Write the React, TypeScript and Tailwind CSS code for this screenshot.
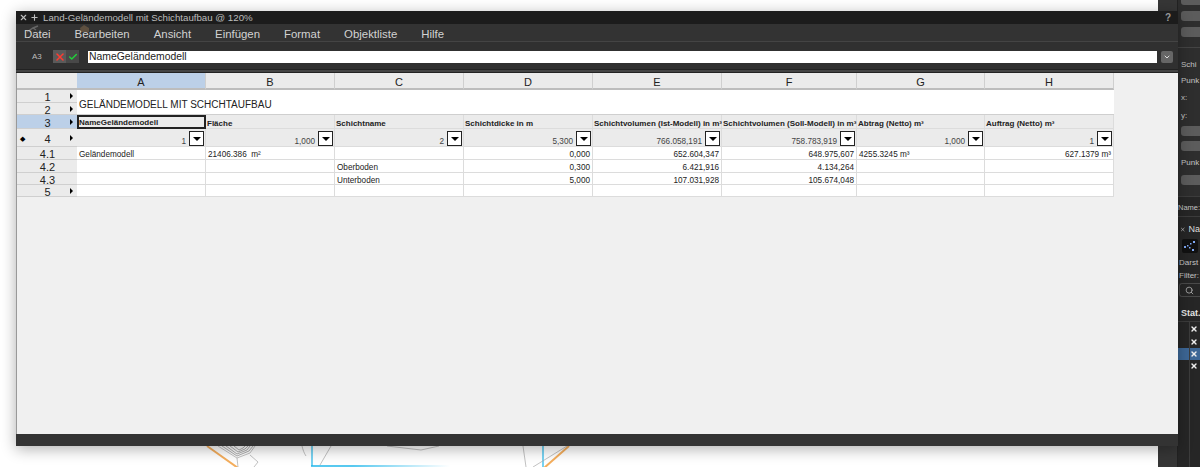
import React from 'react';
import { X, Plus, Check, Search, ChevronDown } from 'lucide-react';

const menuItems = ['Datei', 'Bearbeiten', 'Ansicht', 'Einfügen', 'Format', 'Objektliste', 'Hilfe'];
const columns = ['A', 'B', 'C', 'D', 'E', 'F', 'G', 'H'];

const headerRow = [
  'NameGeländemodell',
  'Fläche',
  'Schichtname',
  'Schichtdicke in m',
  'Schichtvolumen (Ist-Modell) in m³',
  'Schichtvolumen (Soll-Modell) in m³',
  'Abtrag (Netto) m³',
  'Auftrag (Netto) m³',
];
const summaryRow = ['1', '1,000', '2', '5,300', '766.058,191', '758.783,919', '1,000', '1'];

const dataRows = [
  { label: '4.1', cells: ['Geländemodell', '21406.386  m²', '', '0,000', '652.604,347', '648.975,607', '4255.3245 m³', '627.1379 m³'] },
  { label: '4.2', cells: ['', '', 'Oberboden', '0,300', '6.421,916', '4.134,264', '', ''] },
  { label: '4.3', cells: ['', '', 'Unterboden', '5,000', '107.031,928', '105.674,048', '', ''] },
  { label: '5', cells: ['', '', '', '', '', '', '', ''], arrow: true },
];

// columns that hold right aligned values in the data rows
const rightAligned = [false, false, false, true, true, true, false, true];

const Arrow = () => (
  <span className="absolute right-[4px] top-1/2 -translate-y-1/2 border-y-[3px] border-l-[3px] border-y-transparent border-l-black" />
);

const RowHead = ({ label, arrow, active, diamond }: { label: string; arrow?: boolean; active?: boolean; diamond?: boolean }) => (
  <div className={`relative flex items-center justify-center pt-[3px] text-[11px] leading-none text-[#222] border-b border-[#cfcfcf] ${active ? 'bg-[#bcd0e8]' : 'bg-[#ebebeb]'}`}>
    {diamond && <span className="absolute left-[3px] top-1/2 -translate-y-1/2 text-[7px] text-black">◆</span>}
    <span className="pl-[1px]">{label}</span>
    {arrow && <Arrow />}
  </div>
);

const Dropdown = () => (
  <span className="ml-[3px] flex h-[15px] w-[15px] shrink-0 items-center justify-center border border-[#222] bg-white">
    <span className="border-x-[4px] border-t-[4px] border-x-transparent border-t-black" />
  </span>
);

const SideButton = ({ className }: { className: string }) => (
  <div className={`h-[10px] rounded-l-[3px] bg-[#5c5c5c] ml-[3px] ${className}`} />
);

const SideLabel = ({ children, className }: { children: React.ReactNode; className: string }) => (
  <div className={`whitespace-nowrap text-[8px] leading-[10px] text-[#c4c4c4] ${className}`}>{children}</div>
);

const SidePanel = () => (
  <div className="flex h-full w-[42px] overflow-hidden font-['Liberation_Sans',sans-serif]">
    <div className="w-[20px] border-r border-[#222] bg-[#363636]" />
    <div className="relative w-[22px] bg-[#262626]">
      <div className="flex h-[197px] flex-col border-b border-[#3c3c3c] bg-[#2e2e2e]">
        <SideButton className="mt-[-5px]" />
        <SideButton className="mt-[6px]" />
        <SideButton className="mt-[6px]" />
        <div className="mt-[10px] border-t border-[#444]" />
        <SideLabel className="mt-[12px] ml-[3px]">Schi</SideLabel>
        <SideLabel className="mt-[6px] ml-[3px]">Punk</SideLabel>
        <SideLabel className="mt-[7px] ml-[3px]">x:</SideLabel>
        <SideLabel className="mt-[8px] ml-[3px]">y:</SideLabel>
        <SideButton className="mt-[5px]" />
        <SideButton className="mt-[5px]" />
        <SideLabel className="mt-[7px] ml-[3px]">Punk</SideLabel>
        <SideButton className="mt-[7px]" />
      </div>
      <div className="mt-[6px] whitespace-nowrap text-[7.5px] leading-[10px] text-[#c4c4c4]">Name:</div>
      <div className="mt-[3px] border-t border-[#3c3c3c]" />
      <div className="mt-[7px] flex items-center gap-[3px] pl-[2px] text-[9px] leading-[10px] text-[#ddd]">
        <X size={9} strokeWidth={3} className="text-[#ccc]" />
        <span>Na</span>
      </div>
      <div className="mt-[5px] ml-[4px] flex h-[14px] w-[16px] items-center justify-center rounded-[2px] bg-[#111]">
        <svg width="12" height="10" viewBox="0 0 12 10" fill="#7fa8f5">
          <rect x="0" y="5" width="2" height="2" />
          <rect x="3" y="4" width="1.5" height="1.5" />
          <rect x="6" y="2" width="1.5" height="1.5" />
          <rect x="9" y="0" width="2" height="2" />
          <rect x="5" y="6" width="1.5" height="1.5" />
          <rect x="8" y="8" width="2" height="2" />
        </svg>
      </div>
      <SideLabel className="mt-[5px] ml-[1px]">Darst</SideLabel>
      <SideLabel className="mt-[3px] ml-[1px]">Filter:</SideLabel>
      <div className="mt-[2px] ml-[1px] flex h-[14px] items-center rounded-l-[3px] border border-r-0 border-[#4a4a4a] pl-[5px]">
        <Search size={9} className="text-[#bbb]" />
      </div>
      <div className="mt-[11px] border-b border-[#3c3c3c] pb-[3px] pl-[3px] text-[9px] font-bold leading-[10px] text-[#e4e4e4]">Stat.</div>
      <div className="relative flex flex-col pt-[1px]">
        <div className="absolute left-[11px] top-0 h-[200px] border-l border-[#3c3c3c]" />
        {[false, false, true, false].map((selected, i) => (
          <div key={i} className={`flex h-[12.4px] items-center pl-[12px] ${selected ? 'bg-[#3d6796]' : ''}`}>
            <X size={8} strokeWidth={4} className="text-[#eee]" />
          </div>
        ))}
      </div>
    </div>
  </div>
);

const Backdrop = () => (
  <svg className="absolute left-0 top-0" width="1200" height="467" viewBox="0 0 1200 467" fill="none">
    <defs>
      <linearGradient id="fade" x1="312" y1="0" x2="450" y2="0" gradientUnits="userSpaceOnUse">
        <stop offset="0.3" stopColor="#1fb6ea" />
        <stop offset="1" stopColor="#1fb6ea" stopOpacity="0" />
      </linearGradient>
    </defs>
    <path d="M207 446L238 468" stroke="#f5ae5c" strokeWidth="2" />
    <path d="M569 446L544 468" stroke="#f5ae5c" strokeWidth="2" />
    <path d="M312 440V466" stroke="#1fb6ea" strokeWidth="1.2" />
    <path d="M543 440V468" stroke="#1fb6ea" strokeWidth="1.2" />
    <path d="M311 466H450" stroke="url(#fade)" strokeWidth="1.4" />
    <g stroke="#a8a8a8" strokeWidth="0.7">
      <path d="M331 446L320 465" />
      <path d="M302 446C303 450 304 453 306 456" />
      <path d="M387 446L421 450L439 446" />
      <path d="M523 446L526 467" />
      <path d="M567 446L533 467" />
      <path d="M218 446L237 458L250 453L255 446" />
      <path d="M237 458L238 467M250 455L258 462L254 467" />
    </g>
    <g stroke="#8c8c8c" strokeWidth="0.7">
      <path d="M222 446L237 456L249 451L253 446" />
      <path d="M226 446L237 454L247 450L250 446" />
      <path d="M230 446L238 452L245 449L248 446" />
      <path d="M234 446L239 450L243 448L245 446" />
    </g>
  </svg>
);

const SheetTable = () => (
  <div className="grid w-fit grid-cols-[60px_129px_129px_129px_129px_129px_135px_128px_129px] grid-rows-[17px_13px_12px_14px_18px_13px_13px_12px_12px] text-[8.2px] leading-none text-[#222]">
    {/* column header */}
    <div className="border-b-2 border-[#bdbdbd] bg-[#ebebeb]" />
    {columns.map((c, i) => (
      <div
        key={c}
        className={`flex items-center justify-center border-r border-b-2 border-r-[#cfcfcf] border-b-[#bdbdbd] pt-[3px] text-[11px] ${i === 0 ? 'bg-[#bcd0e8]' : 'bg-[#ebebeb]'}`}
      >
        {c}
      </div>
    ))}

    {/* rows 1-2, merged title */}
    <RowHead label="1" arrow />
    <div className="col-span-8 row-span-2 flex items-center border-b border-[#cfcfcf] bg-white pl-[2px] pt-[6px] text-[10px] text-[#222]">
      GELÄNDEMODELL MIT SCHCHTAUFBAU
    </div>
    <RowHead label="2" arrow />

    {/* row 3 */}
    <RowHead label="3" arrow active />
    {headerRow.map((text, i) => (
      <div
        key={text}
        className={`flex items-center overflow-visible whitespace-nowrap bg-[#ebebeb] text-[8px] font-bold ${i === 0 ? 'border-2 border-[#222] pt-[1px]' : 'border-r border-b border-[#dcdcdc] pl-[1px] pt-[5px]'}`}
      >
        {text}
      </div>
    ))}

    {/* row 4 */}
    <RowHead label="4" arrow diamond />
    {summaryRow.map((text, i) => (
      <div key={i} className="flex items-end justify-end border-r border-b border-[#dcdcdc] bg-[#ebebeb] pr-[1px] text-[#444]">
        <span>{text}</span>
        <Dropdown />
      </div>
    ))}

    {/* data rows */}
    {dataRows.map(row => (
      <React.Fragment key={row.label}>
        <RowHead label={row.label} arrow={row.arrow} />
        {row.cells.map((text, i) => (
          <div
            key={i}
            className={`flex items-center whitespace-pre border-r border-b border-[#dcdcdc] bg-white px-[2px] pt-[5px] ${rightAligned[i] ? 'justify-end' : ''}`}
          >
            {text}
          </div>
        ))}
      </React.Fragment>
    ))}
  </div>
);

const App: React.FC = () => {
  return (
    <div className="relative flex h-[467px] w-[1200px] justify-end overflow-hidden bg-white font-['Liberation_Sans',sans-serif]">
      <Backdrop />
      <div className="relative h-full">
        <SidePanel />
      </div>

      {/* spreadsheet window */}
      <div className="absolute left-[16px] top-[11px] flex h-[435px] w-[1162px] flex-col shadow-[0_3px_14px_rgba(0,0,0,0.32)]">
        <div className="flex h-[13px] items-center bg-[#1c1c1c] pl-[3px] pr-[7px] text-[#bdbdbd]">
          <X size={9} strokeWidth={3} />
          <Plus size={9} strokeWidth={3} className="ml-[2px]" />
          <span className="ml-[4px] text-[9.7px] leading-none">Land-Geländemodell mit Schichtaufbau @ 120%</span>
          <span className="ml-auto text-[10px] font-bold leading-none text-[#999]">?</span>
        </div>

        <div className="relative flex h-[18px] items-center gap-[24px] border-b border-[#444] bg-[#333] pl-[8px] pt-[5px] text-[11.4px] text-[#d2d2d2]">
          <svg className="absolute left-[8px] top-[0px]" width="80" height="9" viewBox="0 0 80 9" fill="none">
            <path d="M3 8L9 4L14 2M9 4L12 6" stroke="#666" strokeWidth="1.5" />
            <path d="M56 4L60 1L65 4V8H57Z" fill="#5e5040" />
          </svg>
          {menuItems.map(item => (
            <span key={item} className="relative">{item}</span>
          ))}
        </div>

        <div className="flex h-[27px] items-center bg-[#303030] pr-[5px] pt-[2px]">
          <span className="ml-[16px] w-[21px] text-[8px] text-[#bdbdbd]">A3</span>
          <div className="flex h-[13px] w-[26px] items-center">
            <span className="flex h-full w-[13px] items-center justify-center bg-[#5a5a5a]">
              <X size={12} strokeWidth={3} className="text-[#ff3b30]" />
            </span>
            <span className="flex h-full w-[13px] items-center justify-center bg-[#484848]">
              <Check size={10} strokeWidth={3.5} className="text-[#22d03a]" />
            </span>
          </div>
          <div className="ml-[9px] flex h-[12px] flex-1 items-center bg-white pl-[1px] pt-[1px] text-[10.4px] text-[#222]">NameGeländemodell</div>
          <span className="ml-[4px] flex h-[12px] w-[12px] items-center justify-center rounded-[2px] bg-[#666]">
            <ChevronDown size={8} strokeWidth={3} className="text-[#ddd]" />
          </span>
        </div>

        <div className="h-[4px] border-y border-[#222] bg-[#444]" />

        <div className="flex-1 border-l border-[#999] bg-[#f0f0f0]">
          <SheetTable />
        </div>

        <div className="h-[12px] bg-[#333]" />
      </div>
    </div>
  );
};

export default App;
